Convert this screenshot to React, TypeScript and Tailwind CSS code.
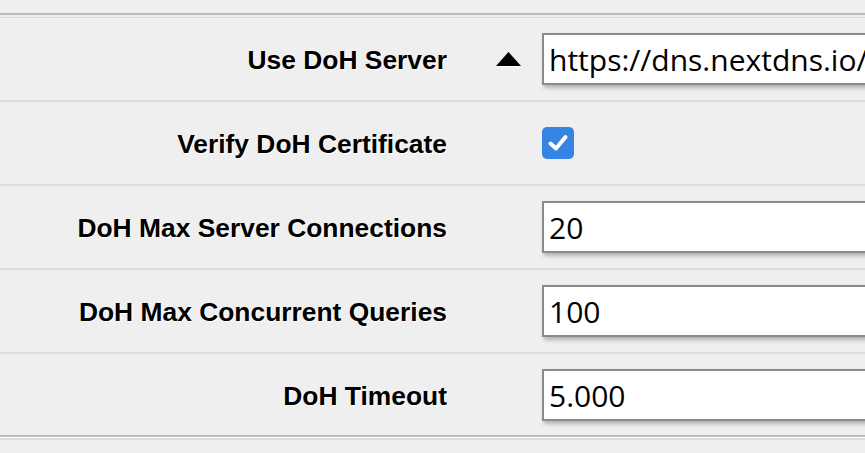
import React from "react";

const labelCls =
  "w-[447px] shrink-0 pt-[4px] text-right text-[26.4px] font-bold text-black [font-family:'Liberation_Sans',Arial,sans-serif] [text-shadow:1px_1px_0_#ffffff]";

function TextField({ value }: { value: string }) {
  return (
    <div className="flex h-[52px] w-[420px] shrink-0 items-center border-2 border-[#8a8a8a] bg-white pl-[5px] pt-[2px] text-[30px] text-black shadow-[2px_3px_4px_rgba(0,0,0,0.25)] [font-family:'Open_Sans','Noto_Sans',sans-serif]">
      <span className="whitespace-nowrap leading-none">{value}</span>
    </div>
  );
}

function Row({ label, last, children, extra }: { label: string; last?: boolean; children: React.ReactNode; extra?: React.ReactNode }) {
  return (
    <div className={last ? "flex h-[81px] items-center" : "flex h-[84px] items-center border-b-2 border-[#dddddd]"}>
      <span className={labelCls}>{label}</span>
      <div className="flex w-[95px] shrink-0 items-center pl-[49px]">{extra}</div>
      {children}
    </div>
  );
}

function Checkbox() {
  return (
    <div className="flex h-[32px] w-[32px] items-center justify-center rounded-[5px] bg-[#3584e4]">
      <svg width="24" height="24" viewBox="0 0 24 24">
        <path d="M4.5 12.5 L10 17.5 L19.5 6" fill="none" stroke="#ffffff" strokeWidth="4" strokeLinecap="round" strokeLinejoin="round" />
      </svg>
    </div>
  );
}

export default function App() {
  return (
    <div className="h-[453px] w-[865px] overflow-hidden bg-[#efefef]">
      <div className="h-[15px] border-b-2 border-[#bbbbbb]" />
      <div className="mt-[2px] border-t border-[#d8d8d8]" />
      <Row
        label="Use DoH Server"
        extra={
          <svg width="25" height="15" viewBox="0 0 25 15" className="drop-shadow-[0_1px_0_#ffffff]">
            <path d="M12.5 0 L25 14 L0 14 Z" fill="#000000" />
          </svg>
        }
      >
        <TextField value="https://dns.nextdns.io/" />
      </Row>
      <Row label="Verify DoH Certificate">
        <Checkbox />
      </Row>
      <Row label="DoH Max Server Connections">
        <TextField value="20" />
      </Row>
      <Row label="DoH Max Concurrent Queries">
        <TextField value="100" />
      </Row>
      <Row label="DoH Timeout" last>
        <TextField value="5.000" />
      </Row>
      <div className="border-t-2 border-[#bbbbbb]" />
      <div className="border-t border-white" />
      <div className="border-t-2 border-[#dddddd]" />
    </div>
  );
}
